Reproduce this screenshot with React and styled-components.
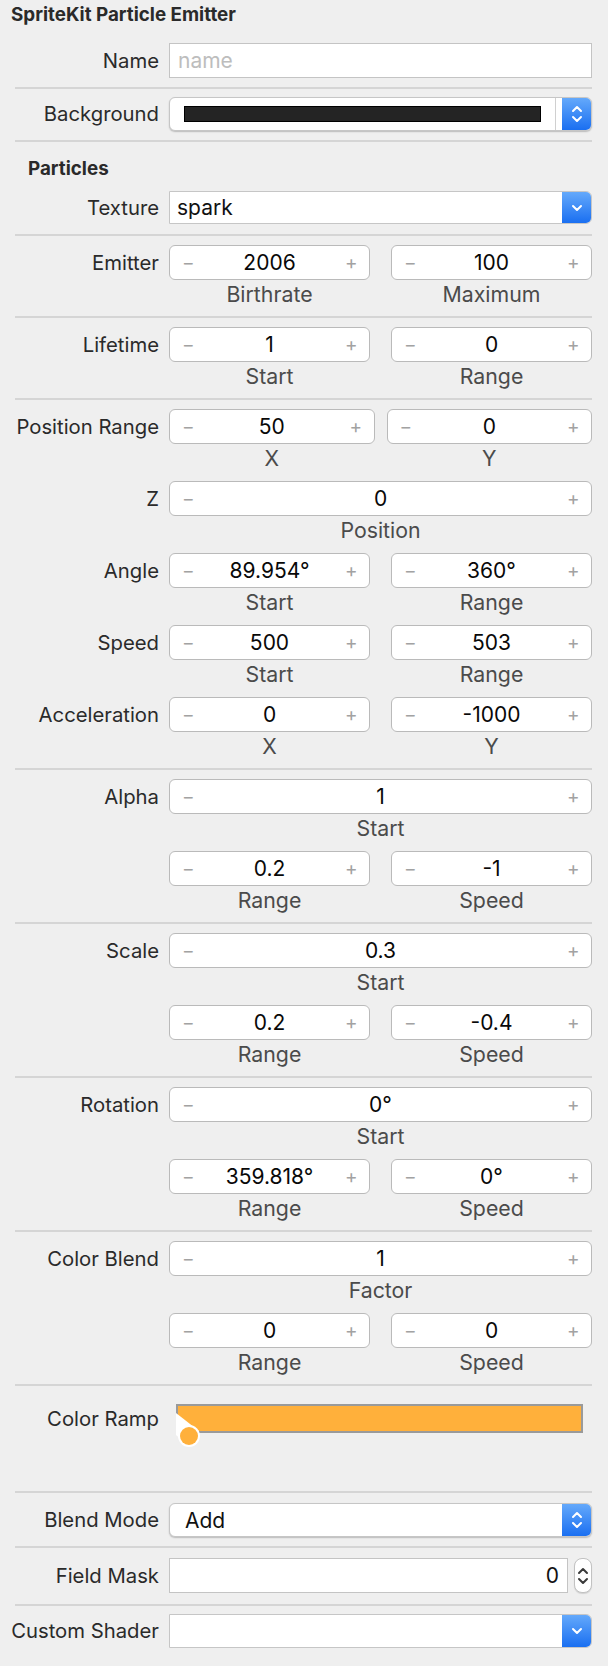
import React from 'react';
import styled, { createGlobalStyle } from 'styled-components';

const GlobalStyle = createGlobalStyle`
  html, body {
    margin: 0;
    padding: 0;
    background: #efefef;
  }
  body {
    font-family: Inter, "Noto Sans", "Liberation Sans", sans-serif;
    -webkit-font-smoothing: antialiased;
  }
`;

const Panel = styled.div`
  width: 608px;
  min-height: 1666px;
  background: #efefef;
  display: flex;
  flex-direction: column;
  box-sizing: border-box;
`;

const Title = styled.div`
  font-weight: 700;
  font-size: 18.8px;
  line-height: 22px;
  color: #2a2a2a;
  padding: ${(p) => p.$top || 0}px 0 0 ${(p) => p.$left}px;
`;

const Divider = styled.div`
  height: 2px;
  background: #d5d5d5;
  margin: 0 16px 0 15px;
  flex-shrink: 0;
`;

const Section = styled.div`
  display: flex;
  flex-direction: column;
  gap: ${(p) => (p.$gap === undefined ? 11 : p.$gap)}px;
  padding: ${(p) => p.$pt}px 0 ${(p) => p.$pb}px;
`;

const Row = styled.div`
  display: grid;
  grid-template-columns: 159px 1fr;
  column-gap: 10px;
  padding-right: 16px;
  align-items: ${(p) => p.$align || 'start'};
`;

const Label = styled.div`
  text-align: right;
  font-size: 20.3px;
  color: #2a2a2a;
  line-height: ${(p) => p.$lh || 35}px;
  white-space: nowrap;
`;

const Pair = styled.div`
  display: grid;
  grid-template-columns: 1fr 1fr;
  column-gap: ${(p) => p.$gap}px;
`;

const Cell = styled.div`
  display: flex;
  flex-direction: column;
  min-width: 0;
`;

const StepperBox = styled.div`
  height: 35px;
  box-sizing: border-box;
  border: 1.5px solid #bababa;
  border-radius: 6px;
  background: #fff;
  display: flex;
  align-items: center;
  padding: 0 12px 0 12px;
`;

const Glyph = styled.span`
  width: 12px;
  text-align: center;
  color: #a2a2a2;
  font-size: 19px;
  line-height: 1;
`;

const Value = styled.span`
  flex: 1;
  text-align: center;
  font-size: 21px;
  color: #080808;
`;

const Caption = styled.div`
  margin-top: 2px;
  line-height: 24px;
  font-size: 21.3px;
  color: #4b4b4b;
  text-align: center;
`;

const TextField = styled.div`
  height: 35px;
  box-sizing: border-box;
  border: 1.5px solid #c4c4c4;
  background: #fff;
  display: flex;
  align-items: center;
  justify-content: ${(p) => (p.$right ? 'flex-end' : 'flex-start')};
  padding: 0 8px;
  font-size: 21px;
  color: ${(p) => (p.$placeholder ? '#bdbdbd' : '#111')};
  flex: 1;
`;

const PopUp = styled.div`
  height: ${(p) => p.$h}px;
  box-sizing: border-box;
  display: flex;
  background: #fff;
  border: 1px solid #c6c6c6;
  border-radius: ${(p) => (p.$combo ? '0 6px 6px 0' : '6px')};
  box-shadow: ${(p) => (p.$combo ? 'none' : '0 1px 1.5px rgba(0,0,0,0.22)')};
  overflow: hidden;
`;

const PopUpBody = styled.div`
  flex: 1;
  display: flex;
  align-items: center;
  padding: 0 ${(p) => p.$pad}px;
  font-size: 21px;
  color: #111;
  border-right: ${(p) => (p.$split ? '1.5px solid #d0d0d0' : 'none')};
  margin-right: ${(p) => (p.$split ? 6 : 0)}px;
`;

const Swatch = styled.div`
  flex: 1;
  height: 16px;
  box-sizing: border-box;
  border: 1.5px solid #000;
  background: #242424;
`;

const BlueButton = styled.div`
  width: 29px;
  flex-shrink: 0;
  display: flex;
  align-items: center;
  justify-content: center;
  background: linear-gradient(#64a9fb, #1a6ff1);
`;

const FieldWrap = styled.div`
  display: flex;
  align-items: center;
  gap: 6px;
`;

const SmallStepper = styled.div`
  width: 18px;
  height: 35px;
  box-sizing: border-box;
  border: 1px solid #c2c2c2;
  border-radius: 8px;
  background: #fff;
  display: flex;
  align-items: center;
  justify-content: center;
  box-shadow: 0 1px 1px rgba(0,0,0,0.12);
`;

const RampWrap = styled.div`
  position: relative;
  height: 41px;
  padding-left: 7px;
  padding-right: 9px;
`;

const RampBar = styled.div`
  height: 29px;
  box-sizing: border-box;
  border: 2px solid #9a9a9a;
  background: #ffb03b;
`;

const Knob = styled.svg`
  position: absolute;
  left: 6px;
  top: 3px;
`;

const UpDown = ({ color = '#fff' }) => (
  <svg width="12" height="22" viewBox="0 0 12 22" fill="none">
    <path d="M2 8 L6 4 L10 8" stroke={color} strokeWidth="2" strokeLinecap="round" strokeLinejoin="round" />
    <path d="M2 14 L6 18 L10 14" stroke={color} strokeWidth="2" strokeLinecap="round" strokeLinejoin="round" />
  </svg>
);

const Down = () => (
  <svg width="12" height="10" viewBox="0 0 12 10" fill="none">
    <path d="M2 3 L6 7 L10 3" stroke="#fff" strokeWidth="2" strokeLinecap="round" strokeLinejoin="round" />
  </svg>
);

const Stepper = ({ value, caption }) => (
  <Cell>
    <StepperBox>
      <Glyph>−</Glyph>
      <Value>{value}</Value>
      <Glyph>+</Glyph>
    </StepperBox>
    <Caption>{caption}</Caption>
  </Cell>
);

const StepperRow = ({ label, items, gap = 21 }) => (
  <Row>
    <Label>{label}</Label>
    {items.length === 1 ? (
      <Stepper value={items[0][0]} caption={items[0][1]} />
    ) : (
      <Pair $gap={gap}>
        {items.map(([v, c]) => (
          <Stepper key={c} value={v} caption={c} />
        ))}
      </Pair>
    )}
  </Row>
);

const groups = [
  [
    { label: 'Emitter', items: [['2006', 'Birthrate'], ['100', 'Maximum']] },
  ],
  [
    { label: 'Lifetime', items: [['1', 'Start'], ['0', 'Range']] },
  ],
  [
    { label: 'Position Range', items: [['50', 'X'], ['0', 'Y']], gap: 12 },
    { label: 'Z', items: [['0', 'Position']] },
    { label: 'Angle', items: [['89.954°', 'Start'], ['360°', 'Range']] },
    { label: 'Speed', items: [['500', 'Start'], ['503', 'Range']] },
    { label: 'Acceleration', items: [['0', 'X'], ['-1000', 'Y']] },
  ],
  [
    { label: 'Alpha', items: [['1', 'Start']] },
    { label: '', items: [['0.2', 'Range'], ['-1', 'Speed']] },
  ],
  [
    { label: 'Scale', items: [['0.3', 'Start']] },
    { label: '', items: [['0.2', 'Range'], ['-0.4', 'Speed']] },
  ],
  [
    { label: 'Rotation', items: [['0°', 'Start']] },
    { label: '', items: [['359.818°', 'Range'], ['0°', 'Speed']] },
  ],
  [
    { label: 'Color Blend', items: [['1', 'Factor']] },
    { label: '', items: [['0', 'Range'], ['0', 'Speed']] },
  ],
];

export default function App() {
  return (
    <>
      <GlobalStyle />
      <Panel>
        <Title $top={4} $left={11}>SpriteKit Particle Emitter</Title>

        <Section $pt={17} $pb={9}>
          <Row $align="center">
            <Label $lh={24}>Name</Label>
            <TextField $placeholder>name</TextField>
          </Row>
        </Section>
        <Divider />

        <Section $pt={8} $pb={9}>
          <Row $align="center">
            <Label $lh={24}>Background</Label>
            <PopUp $h={34}>
              <PopUpBody $pad={14} $split>
                <Swatch />
              </PopUpBody>
              <BlueButton>
                <UpDown />
              </BlueButton>
            </PopUp>
          </Row>
        </Section>
        <Divider />

        <Section $pt={16} $pb={10}>
          <Title $left={28}>Particles</Title>
          <Row $align="center">
            <Label $lh={24}>Texture</Label>
            <PopUp $h={33} $combo>
              <PopUpBody $pad={7}>spark</PopUpBody>
              <BlueButton>
                <Down />
              </BlueButton>
            </PopUp>
          </Row>
        </Section>

        {groups.map((rows, i) => (
          <React.Fragment key={i}>
            <Divider />
            <Section $pt={9} $pb={10}>
              {rows.map((r, j) => (
                <StepperRow key={j} label={r.label} items={r.items} gap={r.gap} />
              ))}
            </Section>
          </React.Fragment>
        ))}
        <Divider />

        <Section $pt={18} $pb={46}>
          <Row>
            <Label $lh={29}>Color Ramp</Label>
            <RampWrap>
              <RampBar />
              <Knob width="28" height="42" viewBox="0 0 28 42">
                <path d="M1 6 L1 28 L12 38 L24 24 Z" fill="#fff" />
                <circle cx="14" cy="29" r="11" fill="#fff" />
                <circle cx="14" cy="29" r="9" fill="#ffb03b" />
              </Knob>
            </RampWrap>
          </Row>
        </Section>
        <Divider />

        <Section $pt={10} $pb={9}>
          <Row $align="center">
            <Label $lh={24}>Blend Mode</Label>
            <PopUp $h={34}>
              <PopUpBody $pad={15}>Add</PopUpBody>
              <BlueButton>
                <UpDown />
              </BlueButton>
            </PopUp>
          </Row>
        </Section>
        <Divider />

        <Section $pt={10} $pb={11}>
          <Row $align="center">
            <Label $lh={24}>Field Mask</Label>
            <FieldWrap>
              <TextField $right>0</TextField>
              <SmallStepper>
                <UpDown color="#3a3a3a" />
              </SmallStepper>
            </FieldWrap>
          </Row>
        </Section>
        <Divider />

        <Section $pt={8} $pb={0}>
          <Row $align="center">
            <Label $lh={24}>Custom Shader</Label>
            <PopUp $h={34} $combo>
              <PopUpBody $pad={7} />
              <BlueButton>
                <Down />
              </BlueButton>
            </PopUp>
          </Row>
        </Section>
      </Panel>
    </>
  );
}
